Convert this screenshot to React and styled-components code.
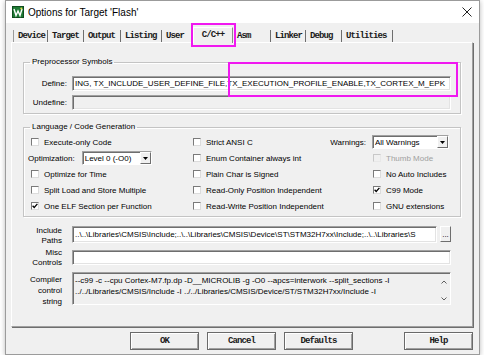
import React from 'react';
import styled, { createGlobalStyle } from 'styled-components';

const GlobalStyle = createGlobalStyle`
  * { box-sizing: border-box; }
  html, body { margin: 0; padding: 0; background: #ffffff; }
  body {
    font-family: 'Liberation Sans', Arial, sans-serif;
    font-size: 8px;
    color: #000;
  }
`;

const tabs = [
  { label: 'Device', w: 35 },
  { label: 'Target', w: 36 },
  { label: 'Output', w: 37 },
  { label: 'Listing', w: 41 },
  { label: 'User', w: 31 },
  { label: 'C/C++', w: 40, active: true },
  { label: 'Asm', w: 38 },
  { label: 'Linker', w: 35 },
  { label: 'Debug', w: 36 },
  { label: 'Utilities', w: 51 },
];

const Window = styled.div`
  position: relative;
  margin-left: 5px;
  width: 475px;
  height: 355px;
  border: 1px solid #9b9b9b;
  background: #f0f0f0;
  box-shadow: 0 1px 5px rgba(0, 0, 0, 0.28);
  display: flex;
  flex-direction: column;
`;

const TitleBar = styled.div`
  height: 22px;
  background: #ffffff;
  display: flex;
  align-items: center;
  padding: 0 7px 0 6px;
  gap: 4px;
`;

const TitleText = styled.span`
  font-family: 'Liberation Sans', Arial, sans-serif;
  font-size: 10px;
  color: #000;
  flex: 1;
  padding-top: 1px;
`;

const Body = styled.div`
  flex: 1;
  display: flex;
  flex-direction: column;
  padding: 0 6px 4px 5px;
`;

const TabStrip = styled.div`
  height: 19px;
  display: flex;
  align-items: flex-end;
  padding-left: 2px;
`;

const Tab = styled.div`
  width: ${(p) => p.$w}px;
  height: ${(p) => (p.$active ? 16 : 12)}px;
  line-height: ${(p) => (p.$active ? 15 : 12)}px;
  padding-left: ${(p) => (p.$active ? 0 : 4)}px;
  text-align: ${(p) => (p.$active ? 'center' : 'left')};
  font-family: 'Liberation Mono', 'Courier New', monospace;
  font-weight: bold;
  font-size: 9px;
  letter-spacing: -0.9px;
  color: #1a1a1a;
  white-space: nowrap;
  border-right: ${(p) => (p.$sep ? '1px solid #6e6e6e' : '1px solid transparent')};
  border-left: ${(p) => (p.$first ? '1px solid #9a9a9a' : 'none')};
  ${(p) =>
    p.$active &&
    `
    position: relative;
    z-index: 1;
    margin-bottom: -1px;
    background: #f0f0f0;
    border-top: 1px solid #ffffff;
    border-left: 1px solid #ffffff;
    border-right: 1px solid #8a8a8a;
  `}
`;

const Panel = styled.div`
  height: 285px;
  border: 1px solid;
  border-color: #ffffff #a0a0a0 #a0a0a0 #ffffff;
  box-shadow: 1px 1px 0 #6e6e6e;
  padding: 14px 11px 0 11px;
  display: flex;
  flex-direction: column;
`;

const Group = styled.fieldset`
  margin: ${(p) => p.$mt || 0}px 0 0 0;
  padding: 0;
  border: 1px solid #c4c4c4;
  box-shadow: inset 1px 1px 0 #ffffff, 1px 1px 0 #ffffff;
  min-width: 0;
`;

const Legend = styled.legend`
  margin-left: 6px;
  padding: 0 2px;
  font-size: 8px;
  line-height: 10px;
`;

const DefineGrid = styled.div`
  display: grid;
  grid-template-columns: 43px minmax(0, 1fr);
  column-gap: 5px;
  row-gap: 4px;
  padding: 9px 9px 3px 0;
  align-items: center;
`;

const FieldLabel = styled.div`
  text-align: right;
  font-size: 8px;
  line-height: ${(p) => p.$lh || 10}px;
  white-space: nowrap;
  color: #000;
  padding-top: ${(p) => p.$down || 0}px;
`;

const Field = styled.div`
  height: ${(p) => p.$h}px;
  background: ${(p) => (p.$disabled ? '#f0f0f0' : '#ffffff')};
  border: 1px solid;
  border-color: #a0a0a0 #ffffff #ffffff #a0a0a0;
  box-shadow: inset 1px 1px 0 #6e6e6e, inset -1px -1px 0 #e3e3e3;
  padding: 0 2px;
  line-height: ${(p) => p.$h - 2}px;
  font-size: 8px;
  white-space: nowrap;
  overflow: hidden;
  flex: 1;
  min-width: 0;
`;

const OptionsGrid = styled.div`
  display: grid;
  grid-template-columns: 165px 127px 129px;
  grid-template-rows: repeat(5, 16px);
  grid-auto-flow: column;
  padding: 2px 0 2px 4px;
  align-items: center;
`;

const CheckRow = styled.label`
  display: flex;
  align-items: center;
  gap: 5px;
  padding-left: ${(p) => p.$indent || 0}px;
  font-size: 8px;
  white-space: nowrap;
  color: ${(p) => (p.$disabled ? '#a0a0a0' : '#000')};
`;

const Box = styled.span`
  width: 8px;
  height: 8px;
  flex: none;
  border: 1px solid;
  border-color: ${(p) =>
    p.$disabled ? '#c8c8c8 #e8e8e8 #e8e8e8 #c8c8c8' : '#7a7a7a #dcdcdc #dcdcdc #7a7a7a'};
  background: ${(p) => (p.$disabled ? '#f0f0f0' : '#ffffff')};
  display: flex;
  align-items: center;
  justify-content: center;
`;

const SelectRow = styled.div`
  display: flex;
  align-items: center;
  justify-content: ${(p) => (p.$end ? 'flex-end' : 'flex-start')};
  gap: ${(p) => p.$gap}px;
  font-size: 8px;
  white-space: nowrap;
`;

const Select = styled.div`
  width: ${(p) => p.$w}px;
  height: 14px;
  background: #ffffff;
  border: 1px solid;
  border-color: #a0a0a0 #ffffff #ffffff #a0a0a0;
  box-shadow: inset 1px 1px 0 #6e6e6e;
  display: flex;
  align-items: center;
  padding-left: 2px;
  font-size: 8px;
`;

const SelectValue = styled.span`
  flex: 1;
`;

const DropButton = styled.span`
  width: 11px;
  height: 12px;
  background: #f0f0f0;
  border: 1px solid;
  border-color: #ffffff #6e6e6e #6e6e6e #ffffff;
  display: flex;
  align-items: center;
  justify-content: center;
`;

const LowerGrid = styled.div`
  display: grid;
  grid-template-columns: 39px minmax(0, 1fr);
  grid-template-rows: 17px 15px 33px;
  column-gap: 10px;
  row-gap: 7px;
  margin: 9px 10px 0 0;
  align-items: center;
`;

const FieldWithButton = styled.div`
  display: flex;
  gap: 3px;
  height: 17px;
  min-width: 0;
`;

const DotsButton = styled.div`
  width: 11px;
  height: 16px;
  flex: none;
  background: #f0f0f0;
  border: 1px solid;
  border-color: #ffffff #6e6e6e #6e6e6e #ffffff;
  font-size: 8px;
  line-height: 15px;
  text-align: center;
`;

const TextArea = styled.div`
  height: 33px;
  background: #f0f0f0;
  border: 1px solid;
  border-color: #a0a0a0 #ffffff #ffffff #a0a0a0;
  box-shadow: inset 1px 1px 0 #6e6e6e;
  display: flex;
  min-width: 0;
`;

const AreaText = styled.div`
  flex: 1;
  min-width: 0;
  padding: 2px 0 0 2px;
  font-size: 8px;
  line-height: 11px;
  white-space: nowrap;
  overflow: hidden;
`;

const ScrollCol = styled.div`
  width: 13px;
  flex: none;
  display: flex;
  flex-direction: column;
  justify-content: space-between;
  align-items: center;
  padding: 7px 0 3px;
`;

const ButtonRow = styled.div`
  display: flex;
  gap: 8px;
  margin-top: 5px;
  padding-left: 119px;
`;

const Button = styled.button`
  width: 69px;
  height: 18px;
  margin-left: ${(p) => (p.$push ? 'auto' : '0')};
  background: #f0f0f0;
  border: 1px solid #6a6a6a;
  box-shadow: inset 1px 1px 0 #ffffff, inset -1px -1px 0 #a0a0a0;
  font-family: 'Liberation Mono', 'Courier New', monospace;
  font-weight: bold;
  font-size: 9px;
  letter-spacing: -0.9px;
  color: #1a1a1a;
  padding: 0;
`;

const Highlight = styled.div`
  position: absolute;
  left: ${(p) => p.$x}px;
  top: ${(p) => p.$y}px;
  width: ${(p) => p.$w}px;
  height: ${(p) => p.$h}px;
  border: 2px solid #f018f0;
  pointer-events: none;
  z-index: 5;
`;

const AppIcon = () => (
  <svg width="12" height="12" viewBox="0 0 12 12">
    <rect x="0" y="0" width="12" height="12" fill="#1f7a35" />
    <rect x="0.5" y="0.5" width="11" height="11" fill="none" stroke="#0f4d1e" />
    <path d="M2 3 L4 9.5 L6 5 L8 9.5 L10 3" fill="none" stroke="#ffffff" strokeWidth="1.4" />
    <circle cx="9.3" cy="2.6" r="1" fill="#e8d84a" />
  </svg>
);

const CloseIcon = () => (
  <svg width="10" height="10" viewBox="0 0 10 10">
    <path d="M0.5 0.5 L9.5 9.5 M9.5 0.5 L0.5 9.5" stroke="#222" strokeWidth="1" />
  </svg>
);

const Check = () => (
  <svg width="6" height="6" viewBox="0 0 6 6">
    <path d="M0.6 2.8 L2.2 4.5 L5.4 0.9" fill="none" stroke="#000" strokeWidth="1.3" />
  </svg>
);

const Arrow = () => (
  <svg width="5" height="3" viewBox="0 0 5 3">
    <path d="M0 0 L5 0 L2.5 3 Z" fill="#000" />
  </svg>
);

const Chevron = ({ up }) => (
  <svg width="6" height="4" viewBox="0 0 6 4">
    <path d={up ? 'M0.5 3.5 L3 1 L5.5 3.5' : 'M0.5 0.5 L3 3 L5.5 0.5'} fill="none" stroke="#606060" strokeWidth="1" />
  </svg>
);

const CheckBox = ({ label, checked, disabled, indent }) => (
  <CheckRow $indent={indent} $disabled={disabled}>
    <Box $disabled={disabled}>{checked && <Check />}</Box>
    {label}
  </CheckRow>
);

const App = () => {
  return (
    <>
      <GlobalStyle />
      <Window>
        <TitleBar>
          <AppIcon />
          <TitleText>Options for Target 'Flash'</TitleText>
          <CloseIcon />
        </TitleBar>
        <Body>
          <TabStrip>
            {tabs.map((t, i) => {
              const next = tabs[i + 1];
              return (
                <Tab
                  key={t.label}
                  $w={t.w}
                  $active={t.active}
                  $first={i === 0}
                  $sep={!t.active && !(next && next.active)}
                >
                  {t.label}
                </Tab>
              );
            })}
          </TabStrip>
          <Panel>
            <Group>
              <Legend>Preprocessor Symbols</Legend>
              <DefineGrid>
                <FieldLabel>Define:</FieldLabel>
                <Field $h={15}>
                  ING, TX_INCLUDE_USER_DEFINE_FILE,TX_EXECUTION_PROFILE_ENABLE,TX_CORTEX_M_EPK
                </Field>
                <FieldLabel>Undefine:</FieldLabel>
                <Field $h={15} $disabled />
              </DefineGrid>
            </Group>
            <Group $mt={8}>
              <Legend>Language / Code Generation</Legend>
              <OptionsGrid>
                <CheckBox label="Execute-only Code" indent={3} />
                <SelectRow $gap={7}>
                  Optimization:
                  <Select $w={70}>
                    <SelectValue>Level 0 (-O0)</SelectValue>
                    <DropButton><Arrow /></DropButton>
                  </Select>
                </SelectRow>
                <CheckBox label="Optimize for Time" indent={3} />
                <CheckBox label="Split Load and Store Multiple" indent={3} />
                <CheckBox label="One ELF Section per Function" checked indent={3} />

                <CheckBox label="Strict ANSI C" />
                <CheckBox label="Enum Container always int" />
                <CheckBox label="Plain Char is Signed" />
                <CheckBox label="Read-Only Position Independent" />
                <CheckBox label="Read-Write Position Independent" />

                <SelectRow $gap={6} $end>
                  Warnings:
                  <Select $w={77}>
                    <SelectValue>All Warnings</SelectValue>
                    <DropButton><Arrow /></DropButton>
                  </Select>
                </SelectRow>
                <CheckBox label="Thumb Mode" disabled indent={53} />
                <CheckBox label="No Auto Includes" indent={53} />
                <CheckBox label="C99 Mode" checked indent={53} />
                <CheckBox label="GNU extensions" indent={53} />
              </OptionsGrid>
            </Group>
            <LowerGrid>
              <FieldLabel $down={3}>Include<br />Paths</FieldLabel>
              <FieldWithButton>
                <Field $h={17}>
                  ..\..\Libraries\CMSIS\Include;..\..\Libraries\CMSIS\Device\ST\STM32H7xx\Include;..\..\Libraries\S
                </Field>
                <DotsButton>...</DotsButton>
              </FieldWithButton>
              <FieldLabel $down={1}>Misc<br />Controls</FieldLabel>
              <Field $h={15} />
              <FieldLabel $lh={11} $down={4}>Compiler<br />control<br />string</FieldLabel>
              <TextArea>
                <AreaText>
                  --c99 -c --cpu Cortex-M7.fp.dp -D__MICROLIB -g -O0 --apcs=interwork --split_sections -I
                  <br />
                  ../../Libraries/CMSIS/Include -I ../../Libraries/CMSIS/Device/ST/STM32H7xx/Include -I
                </AreaText>
                <ScrollCol>
                  <Chevron up />
                  <Chevron />
                </ScrollCol>
              </TextArea>
            </LowerGrid>
          </Panel>
          <ButtonRow>
            <Button>OK</Button>
            <Button>Cancel</Button>
            <Button>Defaults</Button>
            <Button $push>Help</Button>
          </ButtonRow>
        </Body>
        <Highlight $x={185} $y={22} $w={45} $h={24} />
        <Highlight $x={222} $y={61} $w={230} $h={35} />
      </Window>
    </>
  );
};

export default App;
